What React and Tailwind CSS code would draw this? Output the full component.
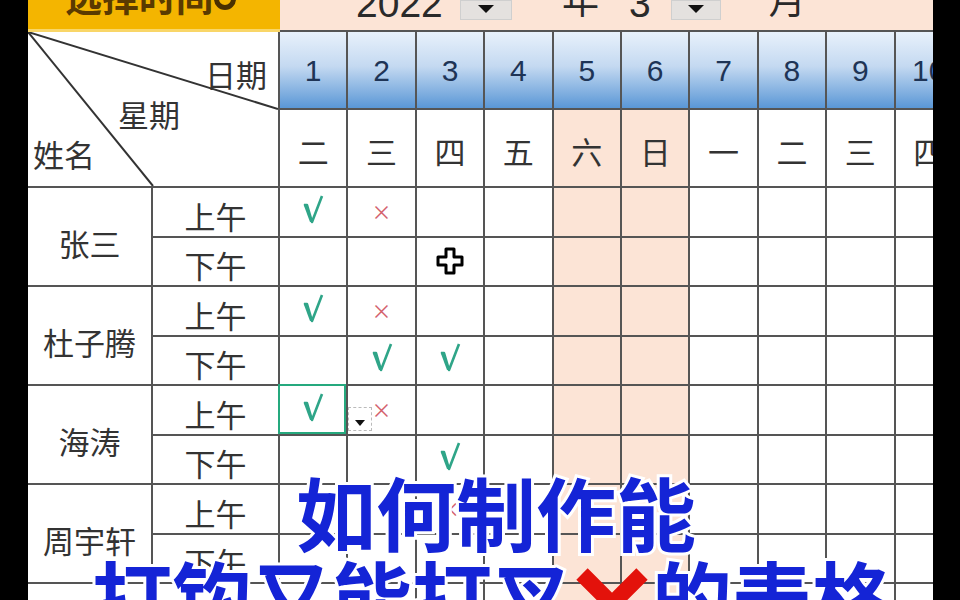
import React from 'react';

const CJK = "font-['Noto_Sans_CJK_SC',sans-serif]";

function PlusCursor() {
  return (
    <svg width="28" height="28" viewBox="0 0 28 28">
      <path d="M10 2h8v8h8v8h-8v8h-8v-8H2v-8h8z" fill="#fff" stroke="#000" strokeWidth="3" strokeLinejoin="round" />
    </svg>
  );
}

function Check() {
  return (
    <svg width="22" height="32" viewBox="0 0 22 32" className="mt-[-2px]">
      <path d="M2 10 L5 10 L10 27 L20 1" fill="none" stroke="#2fa588" strokeWidth="2.6" strokeLinejoin="round" />
      <path d="M1.5 9.5 L5.5 9.5 L10 27 L8 27 Z" fill="#2fa588" />
    </svg>
  );
}

function Mark({ m }) {
  if (m === '√') return <Check />;
  if (m === '×') return <span className={`${CJK} text-[20px] leading-none text-[#d3606c]`}>×</span>;
  if (m === 'cur') return <PlusCursor />;
  return null;
}

export default function App() {
  const days = [1, 2, 3, 4, 5, 6, 7, 8, 9, 10];
  const wk = ['二', '三', '四', '五', '六', '日', '一', '二', '三', '四'];
  const people = ['张三', '杜子腾', '海涛', '周宇轩', ''];
  const marks = {
    '0-0': '√', '0-1': '×',
    '1-2': 'cur',
    '2-0': '√', '2-1': '×',
    '3-1': '√', '3-2': '√',
    '4-0': '√', '4-1': '×',
    '5-2': '√',
    '6-2': '×',
  };

  const rows = [];
  people.forEach((name, p) => {
    [0, 1].forEach((half) => {
      const r = p * 2 + half;
      if (half === 0) {
        rows.push(
          <div key={`n${p}`} className={`row-span-2 flex items-center justify-center border-b-2 border-r-2 border-[#555] bg-white pt-[14px] ${CJK} text-[31px] text-[#333]`}>
            {name}
          </div>
        );
      }
      rows.push(
        <div key={`h${r}`} className={`flex items-center justify-center border-b-2 border-r-2 border-[#555] bg-white pt-[8px] ${CJK} text-[31px] text-[#333]`}>
          {half === 0 ? '上午' : '下午'}
        </div>
      );
      days.forEach((d, c) => {
        const weekend = c === 4 || c === 5;
        const m = marks[`${r}-${c}`];
        rows.push(
          <div key={`c${r}-${c}`} className={`relative flex items-center justify-center border-b-2 border-r-2 border-[#555] ${weekend ? 'bg-[#fce4d6]' : 'bg-white'}`}>
            <Mark m={m} />
            {r === 4 && c === 0 && (
              <div className="absolute -left-[2px] -top-[2px] bottom-0 right-0 z-10 border-2 border-[#25a97e]" />
            )}
            {r === 4 && c === 1 && (
              <div className="absolute left-0 top-[21px] z-10 flex h-[24px] w-[24px] items-end justify-center border border-dashed border-[#bbb] bg-white pb-[4px]">
                <svg width="10" height="6" viewBox="0 0 10 6"><path d="M0 0h10L5 6z" fill="#111" /></svg>
              </div>
            )}
          </div>
        );
      });
    });
  });

  return (
    <div className="relative flex h-[600px] w-[960px] overflow-hidden bg-black">
      <div className="w-[28px] shrink-0 bg-black" />
      <div className="h-[600px] w-[905px] shrink-0 overflow-hidden bg-white">
        <div className="grid w-[936px] grid-cols-[125px_127px_repeat(10,68.4px)] grid-rows-[32px_78px_78px_repeat(9,49.5px)]">
          {/* top row */}
          <div className="col-span-2 flex items-start overflow-hidden border-b-[3px] border-[#f9d668] bg-[#f4b500] pl-[37px]">
            <span className={`-mt-[22px] whitespace-nowrap ${CJK} text-[37px] font-bold leading-none text-[#5a3a00]`}>选择时间</span>
            <span className="-mt-[12px] ml-[1px] h-[22px] w-[22px] shrink-0 rounded-full border-[5px] border-[#4a3000]" />
          </div>
          <div className="col-span-10 flex items-start overflow-hidden border-b-2 border-[#555] bg-[#fce4d6]">
            <span className="-mt-[16px] ml-[76px] w-[96px] font-['Liberation_Sans',Arial,sans-serif] text-[39px] leading-none text-[#2a2a2a]">2022</span>
            <span className="ml-[8px] flex h-[20px] w-[52px] items-start justify-center border border-[#cfcfcf] bg-[#e4e1df] pt-[4px]">
              <svg width="16" height="8" viewBox="0 0 16 8"><path d="M0 0h16L8 8z" fill="#111" /></svg>
            </span>
            <span className={`-mt-[20px] ml-[50px] ${CJK} text-[37px] leading-none text-[#2a2a2a]`}>年</span>
            <span className="-mt-[16px] ml-[30px] font-['Liberation_Sans',Arial,sans-serif] text-[39px] leading-none text-[#2a2a2a]">3</span>
            <span className="ml-[20px] flex h-[20px] w-[50px] items-start justify-center border border-[#cfcfcf] bg-[#e4e1df] pt-[4px]">
              <svg width="16" height="8" viewBox="0 0 16 8"><path d="M0 0h16L8 8z" fill="#111" /></svg>
            </span>
            <span className={`-mt-[20px] ml-[48px] ${CJK} text-[37px] leading-none text-[#2a2a2a]`}>月</span>
          </div>

          {/* diagonal header */}
          <div className="relative col-span-2 row-span-2 border-b-2 border-r-2 border-[#555] bg-white">
            <svg className="absolute inset-0" width="250" height="154" viewBox="0 0 250 154">
              <line x1="0" y1="0" x2="250" y2="77" stroke="#333" strokeWidth="2" />
              <line x1="0" y1="0" x2="125" y2="154" stroke="#333" strokeWidth="2" />
            </svg>
            <span className={`absolute left-[177px] top-[26px] ${CJK} text-[31px] leading-none text-[#333]`}>日期</span>
            <span className={`absolute left-[90px] top-[66px] ${CJK} text-[31px] leading-none text-[#333]`}>星期</span>
            <span className={`absolute left-[5px] top-[106px] ${CJK} text-[31px] leading-none text-[#333]`}>姓名</span>
          </div>

          {days.map((d) => (
            <div key={`d${d}`} className="flex items-center justify-center border-b-2 border-r-2 border-[#555] bg-[linear-gradient(180deg,#e8f1fb_0%,#c4d9f1_45%,#5a97d6_100%)] font-['Liberation_Sans',Arial,sans-serif] text-[30px] text-[#1e3456]">
              {d}
            </div>
          ))}
          {wk.map((w, i) => (
            <div key={`w${i}`} className={`flex items-center justify-center border-b-2 border-r-2 border-[#555] pt-[6px] ${i === 4 || i === 5 ? 'bg-[#fce4d6]' : 'bg-white'} ${CJK} text-[31px] text-[#333]`}>
              {w}
            </div>
          ))}

          {rows}
        </div>
      </div>
      <div className="flex-1 bg-black" />

      {/* overlay caption */}
      <div className={`absolute left-[296px] top-[470px] whitespace-nowrap ${CJK} text-[80px] font-bold leading-none text-[#1424d6] [-webkit-text-stroke:6px_white] [paint-order:stroke_fill]`}>
        如何制作能
      </div>
      <div className={`absolute left-[92px] top-[554px] flex items-start whitespace-nowrap ${CJK} text-[80px] font-bold leading-none text-[#1424d6] [-webkit-text-stroke:6px_white] [paint-order:stroke_fill]`}>
        <span>打钩又能打叉</span>
        <svg className="mt-[10px] shrink-0" width="80" height="80" viewBox="0 0 80 80">
          <path d="M10 10L70 70M70 10L10 70" stroke="#e3120b" strokeWidth="16" strokeLinecap="butt" />
        </svg>
        <span>的表格</span>
      </div>
    </div>
  );
}
